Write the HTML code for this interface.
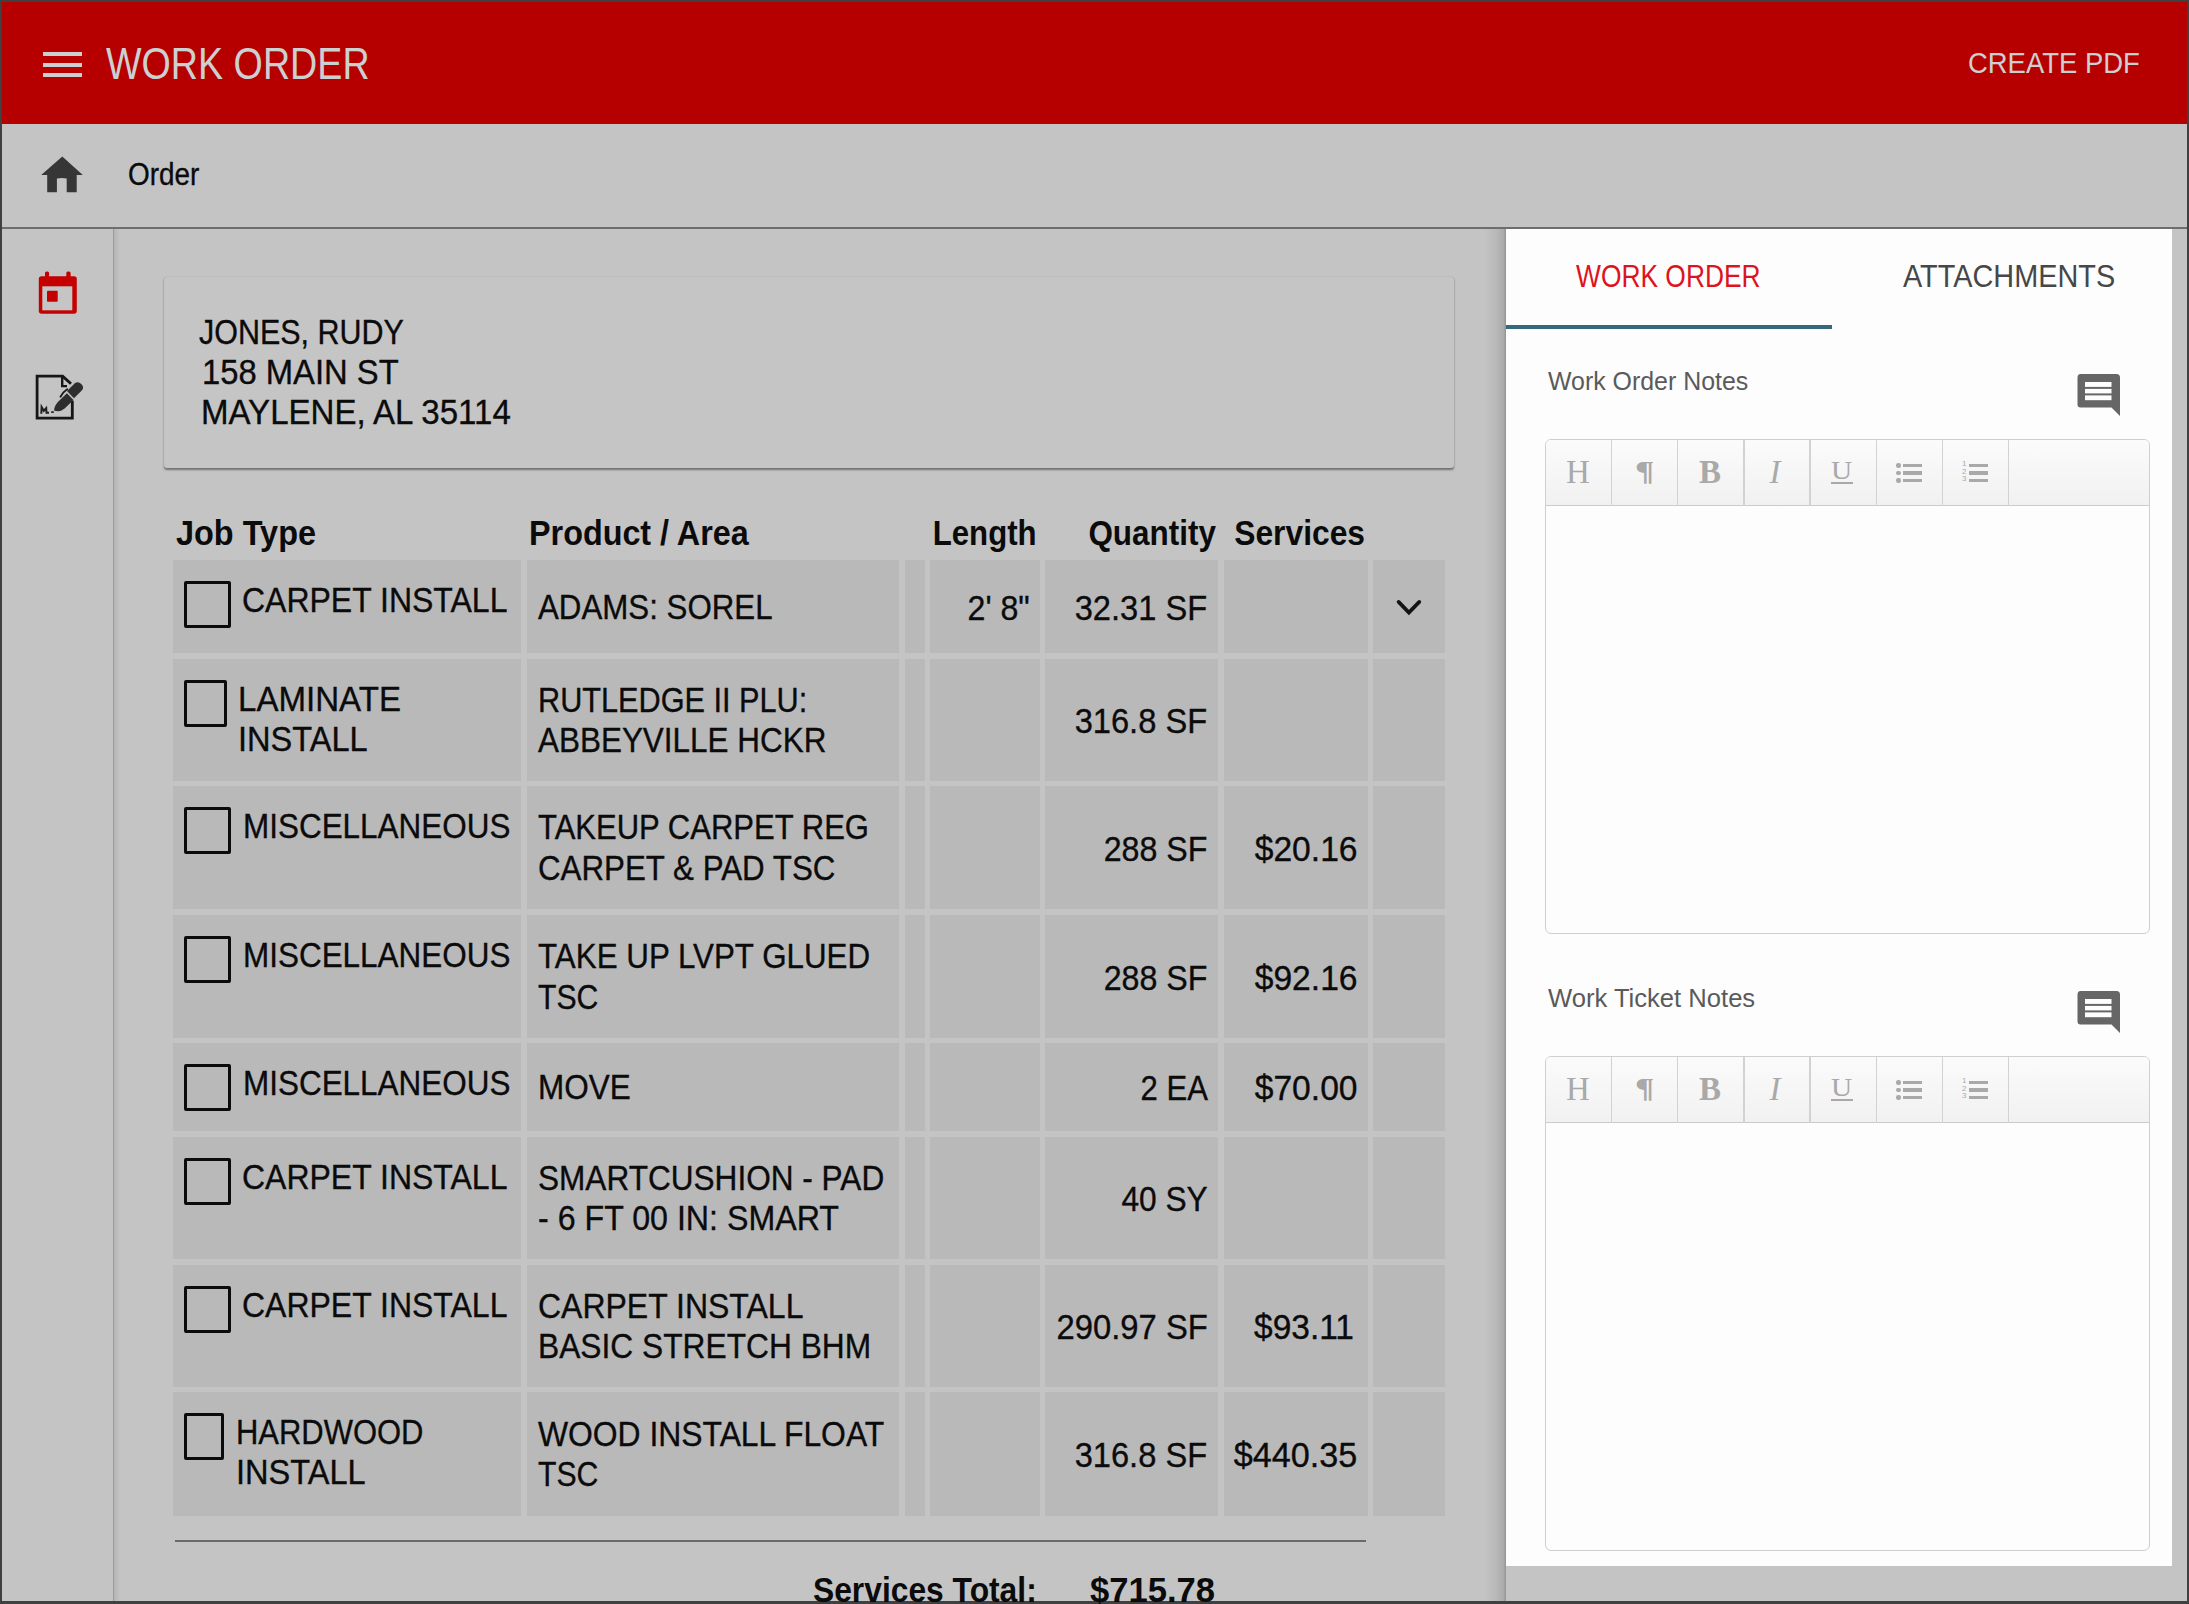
<!DOCTYPE html>
<html><head><meta charset="utf-8"><title>Work Order</title><style>
html,body{margin:0;padding:0;}
body{width:2189px;height:1604px;background:#3f4141;position:relative;overflow:hidden;font-family:"Liberation Sans",sans-serif;}
body>div,body>svg{position:absolute;}
.t{white-space:nowrap;}
.k{-webkit-text-stroke:0.35px #0b0b0b;}
</style></head><body>
<div style="left:2px;top:2px;width:2185.00px;height:1599.00px;background:#c4c4c4;"></div>
<div style="left:2px;top:2px;width:2185.00px;height:122.00px;background:#b60000;"></div>
<div style="left:42.5px;top:52px;width:39.00px;height:4.20px;background:#cdd0d0;"></div>
<div style="left:42.5px;top:62.5px;width:39.00px;height:4.20px;background:#cdd0d0;"></div>
<div style="left:42.5px;top:73px;width:39.00px;height:4.20px;background:#cdd0d0;"></div>
<div class="t" style="top:42.15px;font-size:44px;line-height:44px;font-weight:400;color:#cdd0d0;font-family:'Liberation Sans',sans-serif;left:106.30px;transform:scaleX(0.8558);transform-origin:0 0;">WORK ORDER</div>
<div class="t" style="top:47.81px;font-size:30px;line-height:30px;font-weight:400;color:#cdd0d0;font-family:'Liberation Sans',sans-serif;right:49.21px;text-align:right;transform:scaleX(0.9153);transform-origin:100% 0;">CREATE PDF</div>
<div style="left:2px;top:124px;width:2185.00px;height:102.50px;background:#c4c4c4;"></div>
<div style="left:2px;top:226.5px;width:2185.00px;height:2.00px;background:#6e6e6e;"></div>
<svg style="position:absolute;left:41px;top:155px" width="42" height="38" viewBox="0 0 42 38"><path d="M21.3 1.4 L41.8 19.9 L35.7 19.9 L35.7 37.3 L25.7 37.3 L25.7 23.5 Q20.8 22.5 15.9 23.5 L15.9 37.3 L6.2 37.3 L6.2 19.9 L0.2 19.9 Z" fill="#363636"/></svg>
<div class="t k" style="top:158.76px;font-size:31px;line-height:31px;font-weight:400;color:#0b0b0b;font-family:'Liberation Sans',sans-serif;left:127.50px;transform:scaleX(0.8990);transform-origin:0 0;">Order</div>
<div style="left:112.5px;top:228.5px;width:1.50px;height:1372.50px;background:#9c9c9c;"></div>
<div style="left:114px;top:228.5px;width:6.00px;height:1372.50px;background:linear-gradient(90deg,rgba(0,0,0,0.08),rgba(0,0,0,0));"></div>
<svg style="position:absolute;left:38px;top:270px" width="40" height="45" viewBox="0 0 40 45"><rect x="7" y="1.4" width="4.1" height="9" rx="1.6" fill="#c40000"/><rect x="28.3" y="1.4" width="4.3" height="9" rx="1.6" fill="#c40000"/><rect x="0.8" y="6.2" width="38" height="37.6" rx="2.8" fill="#c40000"/><rect x="4.3" y="16.3" width="30" height="24" fill="#c5c5c5"/><rect x="9" y="20.8" width="10.7" height="10.9" rx="0.8" fill="#c40000"/></svg>
<svg style="position:absolute;left:28px;top:366px" width="60" height="60" viewBox="0 0 60 60"><path d="M44.3 34.8 L44.3 52.2 L9.1 52.2 L9.1 10.1 L34.6 10.1 L43 17.8" fill="none" stroke="#161616" stroke-width="2.8" stroke-linejoin="miter"/><path d="M34.2 11 L34.2 20.1 L39 20.1" fill="none" stroke="#161616" stroke-width="2.4"/><g transform="translate(26,44.5) rotate(-44.1)"><path d="M0 0.4 Q2.5 -3 9 -3.4 L21.3 -3.4 L21.3 6 L9 6 Q3 5.6 0 0.4 Z" fill="#2e2e2e"/><path d="M22.9 -5 L33.5 -5 Q38 -5 38 0 Q38 5 33.5 5 L22.9 5 Z" fill="#2e2e2e"/><path d="M13.5 -5.2 Q19 -7.2 25 -6" fill="none" stroke="#1a1a1a" stroke-width="1.8"/></g><path d="M13.3 47.8 L13.6 41 L15.8 44.8 L18.2 42.2 L18.5 46.8 L21 46.8" fill="none" stroke="#1e1e1e" stroke-width="2"/><rect x="23.2" y="45.2" width="2.6" height="1.8" fill="#2a2a2a"/></svg>
<div style="left:1484px;top:228.5px;width:22.00px;height:1372.50px;background:linear-gradient(90deg,rgba(0,0,0,0),rgba(0,0,0,0.05) 50%,rgba(0,0,0,0.12) 88%,rgba(0,0,0,0.25));"></div>
<div style="left:164px;top:277px;width:1290.00px;height:191.00px;background:#c5c5c5;border-radius:3px;box-shadow:0 1.5px 2px rgba(0,0,0,0.42),0 0 1px rgba(0,0,0,0.12);"></div>
<div class="t k" style="top:314.70px;font-size:34.5px;line-height:34.5px;font-weight:400;color:#0b0b0b;font-family:'Liberation Sans',sans-serif;left:199.30px;transform:scaleX(0.8831);transform-origin:0 0;">JONES, RUDY</div>
<div class="t k" style="top:355.00px;font-size:34.5px;line-height:34.5px;font-weight:400;color:#0b0b0b;font-family:'Liberation Sans',sans-serif;left:202.10px;transform:scaleX(0.9498);transform-origin:0 0;">158 MAIN ST</div>
<div class="t k" style="top:394.60px;font-size:34.5px;line-height:34.5px;font-weight:400;color:#0b0b0b;font-family:'Liberation Sans',sans-serif;left:200.60px;transform:scaleX(0.9577);transform-origin:0 0;">MAYLENE, AL 35114</div>
<div class="t" style="top:515.17px;font-size:35px;line-height:35px;font-weight:700;color:#0b0b0b;font-family:'Liberation Sans',sans-serif;left:176.00px;transform:scaleX(0.9272);transform-origin:0 0;">Job Type</div>
<div class="t" style="top:515.17px;font-size:35px;line-height:35px;font-weight:700;color:#0b0b0b;font-family:'Liberation Sans',sans-serif;left:529.00px;transform:scaleX(0.9236);transform-origin:0 0;">Product / Area</div>
<div class="t" style="top:515.17px;font-size:35px;line-height:35px;font-weight:700;color:#0b0b0b;font-family:'Liberation Sans',sans-serif;right:1152.17px;text-align:right;transform:scaleX(0.8911);transform-origin:100% 0;">Length</div>
<div class="t" style="top:515.17px;font-size:35px;line-height:35px;font-weight:700;color:#0b0b0b;font-family:'Liberation Sans',sans-serif;right:973.16px;text-align:right;transform:scaleX(0.8985);transform-origin:100% 0;">Quantity</div>
<div class="t" style="top:515.17px;font-size:35px;line-height:35px;font-weight:700;color:#0b0b0b;font-family:'Liberation Sans',sans-serif;right:823.78px;text-align:right;transform:scaleX(0.9083);transform-origin:100% 0;">Services</div>
<div style="left:173px;top:560px;width:348.00px;height:93.00px;background:#b9b9ba;"></div>
<div style="left:527px;top:560px;width:372.00px;height:93.00px;background:#b9b9ba;"></div>
<div style="left:905px;top:560px;width:20.00px;height:93.00px;background:#b9b9ba;"></div>
<div style="left:930px;top:560px;width:110.00px;height:93.00px;background:#b9b9ba;"></div>
<div style="left:1045px;top:560px;width:173.00px;height:93.00px;background:#b9b9ba;"></div>
<div style="left:1224px;top:560px;width:144.00px;height:93.00px;background:#b9b9ba;"></div>
<div style="left:1373px;top:560px;width:72.00px;height:93.00px;background:#b9b9ba;"></div>
<div style="left:173px;top:659px;width:348.00px;height:122.00px;background:#b9b9ba;"></div>
<div style="left:527px;top:659px;width:372.00px;height:122.00px;background:#b9b9ba;"></div>
<div style="left:905px;top:659px;width:20.00px;height:122.00px;background:#b9b9ba;"></div>
<div style="left:930px;top:659px;width:110.00px;height:122.00px;background:#b9b9ba;"></div>
<div style="left:1045px;top:659px;width:173.00px;height:122.00px;background:#b9b9ba;"></div>
<div style="left:1224px;top:659px;width:144.00px;height:122.00px;background:#b9b9ba;"></div>
<div style="left:1373px;top:659px;width:72.00px;height:122.00px;background:#b9b9ba;"></div>
<div style="left:173px;top:786px;width:348.00px;height:123.00px;background:#b9b9ba;"></div>
<div style="left:527px;top:786px;width:372.00px;height:123.00px;background:#b9b9ba;"></div>
<div style="left:905px;top:786px;width:20.00px;height:123.00px;background:#b9b9ba;"></div>
<div style="left:930px;top:786px;width:110.00px;height:123.00px;background:#b9b9ba;"></div>
<div style="left:1045px;top:786px;width:173.00px;height:123.00px;background:#b9b9ba;"></div>
<div style="left:1224px;top:786px;width:144.00px;height:123.00px;background:#b9b9ba;"></div>
<div style="left:1373px;top:786px;width:72.00px;height:123.00px;background:#b9b9ba;"></div>
<div style="left:173px;top:915px;width:348.00px;height:123.00px;background:#b9b9ba;"></div>
<div style="left:527px;top:915px;width:372.00px;height:123.00px;background:#b9b9ba;"></div>
<div style="left:905px;top:915px;width:20.00px;height:123.00px;background:#b9b9ba;"></div>
<div style="left:930px;top:915px;width:110.00px;height:123.00px;background:#b9b9ba;"></div>
<div style="left:1045px;top:915px;width:173.00px;height:123.00px;background:#b9b9ba;"></div>
<div style="left:1224px;top:915px;width:144.00px;height:123.00px;background:#b9b9ba;"></div>
<div style="left:1373px;top:915px;width:72.00px;height:123.00px;background:#b9b9ba;"></div>
<div style="left:173px;top:1043px;width:348.00px;height:88.00px;background:#b9b9ba;"></div>
<div style="left:527px;top:1043px;width:372.00px;height:88.00px;background:#b9b9ba;"></div>
<div style="left:905px;top:1043px;width:20.00px;height:88.00px;background:#b9b9ba;"></div>
<div style="left:930px;top:1043px;width:110.00px;height:88.00px;background:#b9b9ba;"></div>
<div style="left:1045px;top:1043px;width:173.00px;height:88.00px;background:#b9b9ba;"></div>
<div style="left:1224px;top:1043px;width:144.00px;height:88.00px;background:#b9b9ba;"></div>
<div style="left:1373px;top:1043px;width:72.00px;height:88.00px;background:#b9b9ba;"></div>
<div style="left:173px;top:1137px;width:348.00px;height:122.00px;background:#b9b9ba;"></div>
<div style="left:527px;top:1137px;width:372.00px;height:122.00px;background:#b9b9ba;"></div>
<div style="left:905px;top:1137px;width:20.00px;height:122.00px;background:#b9b9ba;"></div>
<div style="left:930px;top:1137px;width:110.00px;height:122.00px;background:#b9b9ba;"></div>
<div style="left:1045px;top:1137px;width:173.00px;height:122.00px;background:#b9b9ba;"></div>
<div style="left:1224px;top:1137px;width:144.00px;height:122.00px;background:#b9b9ba;"></div>
<div style="left:1373px;top:1137px;width:72.00px;height:122.00px;background:#b9b9ba;"></div>
<div style="left:173px;top:1265px;width:348.00px;height:122.00px;background:#b9b9ba;"></div>
<div style="left:527px;top:1265px;width:372.00px;height:122.00px;background:#b9b9ba;"></div>
<div style="left:905px;top:1265px;width:20.00px;height:122.00px;background:#b9b9ba;"></div>
<div style="left:930px;top:1265px;width:110.00px;height:122.00px;background:#b9b9ba;"></div>
<div style="left:1045px;top:1265px;width:173.00px;height:122.00px;background:#b9b9ba;"></div>
<div style="left:1224px;top:1265px;width:144.00px;height:122.00px;background:#b9b9ba;"></div>
<div style="left:1373px;top:1265px;width:72.00px;height:122.00px;background:#b9b9ba;"></div>
<div style="left:173px;top:1392px;width:348.00px;height:124.00px;background:#b9b9ba;"></div>
<div style="left:527px;top:1392px;width:372.00px;height:124.00px;background:#b9b9ba;"></div>
<div style="left:905px;top:1392px;width:20.00px;height:124.00px;background:#b9b9ba;"></div>
<div style="left:930px;top:1392px;width:110.00px;height:124.00px;background:#b9b9ba;"></div>
<div style="left:1045px;top:1392px;width:173.00px;height:124.00px;background:#b9b9ba;"></div>
<div style="left:1224px;top:1392px;width:144.00px;height:124.00px;background:#b9b9ba;"></div>
<div style="left:1373px;top:1392px;width:72.00px;height:124.00px;background:#b9b9ba;"></div>
<div style="left:183.5px;top:581px;width:47.50px;height:47.00px;border:3px solid #0b0b0b;border-radius:2px;box-sizing:border-box;"></div>
<div class="t k" style="top:582.95px;font-size:35.5px;line-height:35.5px;font-weight:400;color:#0b0b0b;font-family:'Liberation Sans',sans-serif;left:242.20px;transform:scaleX(0.9009);transform-origin:0 0;">CARPET INSTALL</div>
<div class="t k" style="top:589.65px;font-size:35.5px;line-height:35.5px;font-weight:400;color:#0b0b0b;font-family:'Liberation Sans',sans-serif;left:538.00px;transform:scaleX(0.8806);transform-origin:0 0;">ADAMS: SOREL</div>
<div class="t k" style="top:590.65px;font-size:35.5px;line-height:35.5px;font-weight:400;color:#0b0b0b;font-family:'Liberation Sans',sans-serif;right:1159.57px;text-align:right;transform:scaleX(0.9054);transform-origin:100% 0;">2' 8"</div>
<div class="t k" style="top:590.65px;font-size:35.5px;line-height:35.5px;font-weight:400;color:#0b0b0b;font-family:'Liberation Sans',sans-serif;right:981.53px;text-align:right;transform:scaleX(0.9188);transform-origin:100% 0;">32.31 SF</div>
<div style="left:183.5px;top:680px;width:43.30px;height:47.00px;border:3px solid #0b0b0b;border-radius:2px;box-sizing:border-box;"></div>
<div class="t k" style="top:681.95px;font-size:35.5px;line-height:35.5px;font-weight:400;color:#0b0b0b;font-family:'Liberation Sans',sans-serif;left:238.10px;transform:scaleX(0.9320);transform-origin:0 0;">LAMINATE</div>
<div class="t k" style="top:722.45px;font-size:35.5px;line-height:35.5px;font-weight:400;color:#0b0b0b;font-family:'Liberation Sans',sans-serif;left:238.10px;transform:scaleX(0.9173);transform-origin:0 0;">INSTALL</div>
<div class="t k" style="top:682.90px;font-size:35.5px;line-height:35.5px;font-weight:400;color:#0b0b0b;font-family:'Liberation Sans',sans-serif;left:538.00px;transform:scaleX(0.8640);transform-origin:0 0;">RUTLEDGE II PLU:</div>
<div class="t k" style="top:723.40px;font-size:35.5px;line-height:35.5px;font-weight:400;color:#0b0b0b;font-family:'Liberation Sans',sans-serif;left:538.00px;transform:scaleX(0.8857);transform-origin:0 0;">ABBEYVILLE HCKR</div>
<div class="t k" style="top:704.15px;font-size:35.5px;line-height:35.5px;font-weight:400;color:#0b0b0b;font-family:'Liberation Sans',sans-serif;right:981.53px;text-align:right;transform:scaleX(0.9188);transform-origin:100% 0;">316.8 SF</div>
<div style="left:183.5px;top:807px;width:47.50px;height:47.00px;border:3px solid #0b0b0b;border-radius:2px;box-sizing:border-box;"></div>
<div class="t k" style="top:808.95px;font-size:35.5px;line-height:35.5px;font-weight:400;color:#0b0b0b;font-family:'Liberation Sans',sans-serif;left:243.30px;transform:scaleX(0.8860);transform-origin:0 0;">MISCELLANEOUS</div>
<div class="t k" style="top:810.40px;font-size:35.5px;line-height:35.5px;font-weight:400;color:#0b0b0b;font-family:'Liberation Sans',sans-serif;left:538.00px;transform:scaleX(0.8738);transform-origin:0 0;">TAKEUP CARPET REG</div>
<div class="t k" style="top:850.90px;font-size:35.5px;line-height:35.5px;font-weight:400;color:#0b0b0b;font-family:'Liberation Sans',sans-serif;left:538.00px;transform:scaleX(0.8817);transform-origin:0 0;">CARPET &amp; PAD TSC</div>
<div class="t k" style="top:831.65px;font-size:35.5px;line-height:35.5px;font-weight:400;color:#0b0b0b;font-family:'Liberation Sans',sans-serif;right:981.54px;text-align:right;transform:scaleX(0.9066);transform-origin:100% 0;">288 SF</div>
<div class="t k" style="top:831.65px;font-size:35.5px;line-height:35.5px;font-weight:400;color:#0b0b0b;font-family:'Liberation Sans',sans-serif;right:831.82px;text-align:right;transform:scaleX(0.9475);transform-origin:100% 0;">$20.16</div>
<div style="left:183.5px;top:936px;width:47.50px;height:47.00px;border:3px solid #0b0b0b;border-radius:2px;box-sizing:border-box;"></div>
<div class="t k" style="top:937.95px;font-size:35.5px;line-height:35.5px;font-weight:400;color:#0b0b0b;font-family:'Liberation Sans',sans-serif;left:243.30px;transform:scaleX(0.8860);transform-origin:0 0;">MISCELLANEOUS</div>
<div class="t k" style="top:939.40px;font-size:35.5px;line-height:35.5px;font-weight:400;color:#0b0b0b;font-family:'Liberation Sans',sans-serif;left:538.00px;transform:scaleX(0.8830);transform-origin:0 0;">TAKE UP LVPT GLUED</div>
<div class="t k" style="top:979.90px;font-size:35.5px;line-height:35.5px;font-weight:400;color:#0b0b0b;font-family:'Liberation Sans',sans-serif;left:538.00px;transform:scaleX(0.8507);transform-origin:0 0;">TSC</div>
<div class="t k" style="top:960.65px;font-size:35.5px;line-height:35.5px;font-weight:400;color:#0b0b0b;font-family:'Liberation Sans',sans-serif;right:981.54px;text-align:right;transform:scaleX(0.9066);transform-origin:100% 0;">288 SF</div>
<div class="t k" style="top:960.65px;font-size:35.5px;line-height:35.5px;font-weight:400;color:#0b0b0b;font-family:'Liberation Sans',sans-serif;right:831.82px;text-align:right;transform:scaleX(0.9475);transform-origin:100% 0;">$92.16</div>
<div style="left:183.5px;top:1064px;width:47.50px;height:47.00px;border:3px solid #0b0b0b;border-radius:2px;box-sizing:border-box;"></div>
<div class="t k" style="top:1065.95px;font-size:35.5px;line-height:35.5px;font-weight:400;color:#0b0b0b;font-family:'Liberation Sans',sans-serif;left:243.30px;transform:scaleX(0.8860);transform-origin:0 0;">MISCELLANEOUS</div>
<div class="t k" style="top:1070.15px;font-size:35.5px;line-height:35.5px;font-weight:400;color:#0b0b0b;font-family:'Liberation Sans',sans-serif;left:538.00px;transform:scaleX(0.8871);transform-origin:0 0;">MOVE</div>
<div class="t k" style="top:1071.15px;font-size:35.5px;line-height:35.5px;font-weight:400;color:#0b0b0b;font-family:'Liberation Sans',sans-serif;right:981.53px;text-align:right;transform:scaleX(0.8753);transform-origin:100% 0;">2 EA</div>
<div class="t k" style="top:1071.15px;font-size:35.5px;line-height:35.5px;font-weight:400;color:#0b0b0b;font-family:'Liberation Sans',sans-serif;right:831.82px;text-align:right;transform:scaleX(0.9475);transform-origin:100% 0;">$70.00</div>
<div style="left:183.5px;top:1158px;width:47.50px;height:47.00px;border:3px solid #0b0b0b;border-radius:2px;box-sizing:border-box;"></div>
<div class="t k" style="top:1159.95px;font-size:35.5px;line-height:35.5px;font-weight:400;color:#0b0b0b;font-family:'Liberation Sans',sans-serif;left:242.40px;transform:scaleX(0.9009);transform-origin:0 0;">CARPET INSTALL</div>
<div class="t k" style="top:1160.90px;font-size:35.5px;line-height:35.5px;font-weight:400;color:#0b0b0b;font-family:'Liberation Sans',sans-serif;left:538.00px;transform:scaleX(0.8895);transform-origin:0 0;">SMARTCUSHION - PAD</div>
<div class="t k" style="top:1201.40px;font-size:35.5px;line-height:35.5px;font-weight:400;color:#0b0b0b;font-family:'Liberation Sans',sans-serif;left:538.00px;transform:scaleX(0.9064);transform-origin:0 0;">- 6 FT 00 IN: SMART</div>
<div class="t k" style="top:1182.15px;font-size:35.5px;line-height:35.5px;font-weight:400;color:#0b0b0b;font-family:'Liberation Sans',sans-serif;right:981.49px;text-align:right;transform:scaleX(0.8925);transform-origin:100% 0;">40 SY</div>
<div style="left:183.5px;top:1286px;width:47.50px;height:47.00px;border:3px solid #0b0b0b;border-radius:2px;box-sizing:border-box;"></div>
<div class="t k" style="top:1287.95px;font-size:35.5px;line-height:35.5px;font-weight:400;color:#0b0b0b;font-family:'Liberation Sans',sans-serif;left:242.40px;transform:scaleX(0.9009);transform-origin:0 0;">CARPET INSTALL</div>
<div class="t k" style="top:1288.90px;font-size:35.5px;line-height:35.5px;font-weight:400;color:#0b0b0b;font-family:'Liberation Sans',sans-serif;left:538.00px;transform:scaleX(0.9009);transform-origin:0 0;">CARPET INSTALL</div>
<div class="t k" style="top:1329.40px;font-size:35.5px;line-height:35.5px;font-weight:400;color:#0b0b0b;font-family:'Liberation Sans',sans-serif;left:538.00px;transform:scaleX(0.8938);transform-origin:0 0;">BASIC STRETCH BHM</div>
<div class="t k" style="top:1310.15px;font-size:35.5px;line-height:35.5px;font-weight:400;color:#0b0b0b;font-family:'Liberation Sans',sans-serif;right:981.49px;text-align:right;transform:scaleX(0.9237);transform-origin:100% 0;">290.97 SF</div>
<div class="t k" style="top:1310.15px;font-size:35.5px;line-height:35.5px;font-weight:400;color:#0b0b0b;font-family:'Liberation Sans',sans-serif;right:835.36px;text-align:right;transform:scaleX(0.9433);transform-origin:100% 0;">$93.11</div>
<div style="left:183.5px;top:1413px;width:40.60px;height:47.00px;border:3px solid #0b0b0b;border-radius:2px;box-sizing:border-box;"></div>
<div class="t k" style="top:1414.95px;font-size:35.5px;line-height:35.5px;font-weight:400;color:#0b0b0b;font-family:'Liberation Sans',sans-serif;left:235.70px;transform:scaleX(0.8721);transform-origin:0 0;">HARDWOOD</div>
<div class="t k" style="top:1455.45px;font-size:35.5px;line-height:35.5px;font-weight:400;color:#0b0b0b;font-family:'Liberation Sans',sans-serif;left:235.70px;transform:scaleX(0.9173);transform-origin:0 0;">INSTALL</div>
<div class="t k" style="top:1416.90px;font-size:35.5px;line-height:35.5px;font-weight:400;color:#0b0b0b;font-family:'Liberation Sans',sans-serif;left:538.00px;transform:scaleX(0.8971);transform-origin:0 0;">WOOD INSTALL FLOAT</div>
<div class="t k" style="top:1457.40px;font-size:35.5px;line-height:35.5px;font-weight:400;color:#0b0b0b;font-family:'Liberation Sans',sans-serif;left:538.00px;transform:scaleX(0.8507);transform-origin:0 0;">TSC</div>
<div class="t k" style="top:1438.15px;font-size:35.5px;line-height:35.5px;font-weight:400;color:#0b0b0b;font-family:'Liberation Sans',sans-serif;right:981.53px;text-align:right;transform:scaleX(0.9188);transform-origin:100% 0;">316.8 SF</div>
<div class="t k" style="top:1438.15px;font-size:35.5px;line-height:35.5px;font-weight:400;color:#0b0b0b;font-family:'Liberation Sans',sans-serif;right:831.78px;text-align:right;transform:scaleX(0.9626);transform-origin:100% 0;">$440.35</div>
<svg style="position:absolute;left:1393px;top:596px" width="32" height="24" viewBox="0 0 32 24"><path d="M5.6 5.9 L15.9 16.6 L26.3 5.9" fill="none" stroke="#141414" stroke-width="3.7" stroke-linecap="round" stroke-linejoin="miter"/></svg>
<div style="left:175px;top:1539.5px;width:1190.50px;height:2.00px;background:#6a6a6a;"></div>
<div class="t" style="top:1571.87px;font-size:35px;line-height:35px;font-weight:700;color:#0b0b0b;font-family:'Liberation Sans',sans-serif;left:812.90px;transform:scaleX(0.9079);transform-origin:0 0;">Services Total:</div>
<div class="t" style="top:1571.87px;font-size:35px;line-height:35px;font-weight:700;color:#0b0b0b;font-family:'Liberation Sans',sans-serif;left:1090.30px;transform:scaleX(0.9881);transform-origin:0 0;">$715.78</div>
<div style="left:1506px;top:228.5px;width:666.00px;height:1337.50px;background:#fdfdfd;"></div>
<div style="left:1506px;top:324.5px;width:325.50px;height:4.30px;background:#37687b;"></div>
<div class="t" style="top:261.16px;font-size:31px;line-height:31px;font-weight:400;color:#dd1320;font-family:'Liberation Sans',sans-serif;left:1575.60px;transform:scaleX(0.8507);transform-origin:0 0;">WORK ORDER</div>
<div class="t" style="top:261.16px;font-size:31px;line-height:31px;font-weight:400;color:#474747;font-family:'Liberation Sans',sans-serif;left:1902.70px;transform:scaleX(0.9311);transform-origin:0 0;">ATTACHMENTS</div>
<div class="t" style="top:367.99px;font-size:26px;line-height:26px;font-weight:400;color:#5a5a5a;font-family:'Liberation Sans',sans-serif;left:1548.00px;transform:scaleX(0.9579);transform-origin:0 0;">Work Order Notes</div>
<svg style="position:absolute;left:2077px;top:373px" width="44" height="44" viewBox="0 0 44 44"><path d="M3.5 1 H39.5 Q43 1 43 4.5 V43 L34.5 34.5 H3.5 Q0.5 34.5 0.5 31.5 V4.5 Q0.5 1 3.5 1 Z" fill="#666666"/><rect x="8" y="9" width="26.5" height="4.9" fill="#fdfdfd"/><rect x="8" y="15.9" width="26.5" height="4.5" fill="#fdfdfd"/><rect x="8" y="22.4" width="26.5" height="4.8" fill="#fdfdfd"/></svg>
<div style="left:1544.5px;top:439px;width:605px;height:495px;border:1.5px solid #cfcfcf;border-radius:6px;box-sizing:border-box;background:#fdfdfd;overflow:hidden"><div style="position:absolute;left:0;top:0;right:0;height:65px;border-bottom:1.5px solid #cbcbcb;background:linear-gradient(#fbfbfb,#f1f1f1);"></div><div style="position:absolute;left:65.2px;top:0;width:1.5px;height:66px;background:#d2d2d2"></div><div style="position:absolute;left:131.4px;top:0;width:1.5px;height:66px;background:#d2d2d2"></div><div style="position:absolute;left:197.6px;top:0;width:1.5px;height:66px;background:#d2d2d2"></div><div style="position:absolute;left:263.8px;top:0;width:1.5px;height:66px;background:#d2d2d2"></div><div style="position:absolute;left:330.0px;top:0;width:1.5px;height:66px;background:#d2d2d2"></div><div style="position:absolute;left:396.2px;top:0;width:1.5px;height:66px;background:#d2d2d2"></div><div style="position:absolute;left:462.4px;top:0;width:1.5px;height:66px;background:#d2d2d2"></div></div>
<div class="t" style="top:455.57px;font-size:33px;line-height:33px;font-weight:400;color:#a9a9a9;font-family:'Liberation Serif',serif;left:1566.00px;">H</div>
<div class="t" style="top:457.12px;font-size:27.5px;line-height:27.5px;font-weight:700;color:#a9a9a9;font-family:'Liberation Serif',serif;left:1634.50px;transform:scaleX(1.3000);transform-origin:0 0;">&#182;</div>
<div class="t" style="top:455.57px;font-size:33px;line-height:33px;font-weight:700;color:#a9a9a9;font-family:'Liberation Serif',serif;left:1699.00px;">B</div>
<div class="t" style="top:455.57px;font-size:33px;line-height:33px;font-weight:400;color:#a9a9a9;font-family:'Liberation Serif',serif;left:1769.50px;font-style:italic;">I</div>
<div class="t" style="top:458.29px;font-size:26px;line-height:26px;font-weight:400;color:#a9a9a9;font-family:'Liberation Serif',serif;left:1831.20px;transform:scaleX(1.1300);transform-origin:0 0;">U</div>
<div style="left:1831px;top:481.5px;width:22.00px;height:2.00px;background:#a9a9a9;"></div>
<div style="left:1896px;top:463.0px;width:4.5px;height:4.5px;border-radius:50%;background:#a9a9a9"></div>
<div style="left:1903px;top:463.5px;width:19.00px;height:3.50px;background:#a9a9a9;"></div>
<div style="left:1896px;top:470.6px;width:4.5px;height:4.5px;border-radius:50%;background:#a9a9a9"></div>
<div style="left:1903px;top:471.1px;width:19.00px;height:3.50px;background:#a9a9a9;"></div>
<div style="left:1896px;top:478.2px;width:4.5px;height:4.5px;border-radius:50%;background:#a9a9a9"></div>
<div style="left:1903px;top:478.7px;width:19.00px;height:3.50px;background:#a9a9a9;"></div>
<div style="left:1962px;top:460.0px;font-size:8px;line-height:8px;color:#a9a9a9;font-family:'Liberation Sans',sans-serif">1</div>
<div style="left:1969px;top:463.5px;width:19.00px;height:3.50px;background:#a9a9a9;"></div>
<div style="left:1962px;top:467.6px;font-size:8px;line-height:8px;color:#a9a9a9;font-family:'Liberation Sans',sans-serif">2</div>
<div style="left:1969px;top:471.1px;width:19.00px;height:3.50px;background:#a9a9a9;"></div>
<div style="left:1962px;top:475.2px;font-size:8px;line-height:8px;color:#a9a9a9;font-family:'Liberation Sans',sans-serif">3</div>
<div style="left:1969px;top:478.7px;width:19.00px;height:3.50px;background:#a9a9a9;"></div>
<div class="t" style="top:984.99px;font-size:26px;line-height:26px;font-weight:400;color:#5a5a5a;font-family:'Liberation Sans',sans-serif;left:1548.00px;transform:scaleX(0.9843);transform-origin:0 0;">Work Ticket Notes</div>
<svg style="position:absolute;left:2077px;top:990px" width="44" height="44" viewBox="0 0 44 44"><path d="M3.5 1 H39.5 Q43 1 43 4.5 V43 L34.5 34.5 H3.5 Q0.5 34.5 0.5 31.5 V4.5 Q0.5 1 3.5 1 Z" fill="#666666"/><rect x="8" y="9" width="26.5" height="4.9" fill="#fdfdfd"/><rect x="8" y="15.9" width="26.5" height="4.5" fill="#fdfdfd"/><rect x="8" y="22.4" width="26.5" height="4.8" fill="#fdfdfd"/></svg>
<div style="left:1544.5px;top:1056px;width:605px;height:495px;border:1.5px solid #cfcfcf;border-radius:6px;box-sizing:border-box;background:#fdfdfd;overflow:hidden"><div style="position:absolute;left:0;top:0;right:0;height:65px;border-bottom:1.5px solid #cbcbcb;background:linear-gradient(#fbfbfb,#f1f1f1);"></div><div style="position:absolute;left:65.2px;top:0;width:1.5px;height:66px;background:#d2d2d2"></div><div style="position:absolute;left:131.4px;top:0;width:1.5px;height:66px;background:#d2d2d2"></div><div style="position:absolute;left:197.6px;top:0;width:1.5px;height:66px;background:#d2d2d2"></div><div style="position:absolute;left:263.8px;top:0;width:1.5px;height:66px;background:#d2d2d2"></div><div style="position:absolute;left:330.0px;top:0;width:1.5px;height:66px;background:#d2d2d2"></div><div style="position:absolute;left:396.2px;top:0;width:1.5px;height:66px;background:#d2d2d2"></div><div style="position:absolute;left:462.4px;top:0;width:1.5px;height:66px;background:#d2d2d2"></div></div>
<div class="t" style="top:1072.57px;font-size:33px;line-height:33px;font-weight:400;color:#a9a9a9;font-family:'Liberation Serif',serif;left:1566.00px;">H</div>
<div class="t" style="top:1074.12px;font-size:27.5px;line-height:27.5px;font-weight:700;color:#a9a9a9;font-family:'Liberation Serif',serif;left:1634.50px;transform:scaleX(1.3000);transform-origin:0 0;">&#182;</div>
<div class="t" style="top:1072.57px;font-size:33px;line-height:33px;font-weight:700;color:#a9a9a9;font-family:'Liberation Serif',serif;left:1699.00px;">B</div>
<div class="t" style="top:1072.57px;font-size:33px;line-height:33px;font-weight:400;color:#a9a9a9;font-family:'Liberation Serif',serif;left:1769.50px;font-style:italic;">I</div>
<div class="t" style="top:1075.29px;font-size:26px;line-height:26px;font-weight:400;color:#a9a9a9;font-family:'Liberation Serif',serif;left:1831.20px;transform:scaleX(1.1300);transform-origin:0 0;">U</div>
<div style="left:1831px;top:1098.5px;width:22.00px;height:2.00px;background:#a9a9a9;"></div>
<div style="left:1896px;top:1080.0px;width:4.5px;height:4.5px;border-radius:50%;background:#a9a9a9"></div>
<div style="left:1903px;top:1080.5px;width:19.00px;height:3.50px;background:#a9a9a9;"></div>
<div style="left:1896px;top:1087.6px;width:4.5px;height:4.5px;border-radius:50%;background:#a9a9a9"></div>
<div style="left:1903px;top:1088.1px;width:19.00px;height:3.50px;background:#a9a9a9;"></div>
<div style="left:1896px;top:1095.2px;width:4.5px;height:4.5px;border-radius:50%;background:#a9a9a9"></div>
<div style="left:1903px;top:1095.7px;width:19.00px;height:3.50px;background:#a9a9a9;"></div>
<div style="left:1962px;top:1077.0px;font-size:8px;line-height:8px;color:#a9a9a9;font-family:'Liberation Sans',sans-serif">1</div>
<div style="left:1969px;top:1080.5px;width:19.00px;height:3.50px;background:#a9a9a9;"></div>
<div style="left:1962px;top:1084.6px;font-size:8px;line-height:8px;color:#a9a9a9;font-family:'Liberation Sans',sans-serif">2</div>
<div style="left:1969px;top:1088.1px;width:19.00px;height:3.50px;background:#a9a9a9;"></div>
<div style="left:1962px;top:1092.2px;font-size:8px;line-height:8px;color:#a9a9a9;font-family:'Liberation Sans',sans-serif">3</div>
<div style="left:1969px;top:1095.7px;width:19.00px;height:3.50px;background:#a9a9a9;"></div>
</body></html>
